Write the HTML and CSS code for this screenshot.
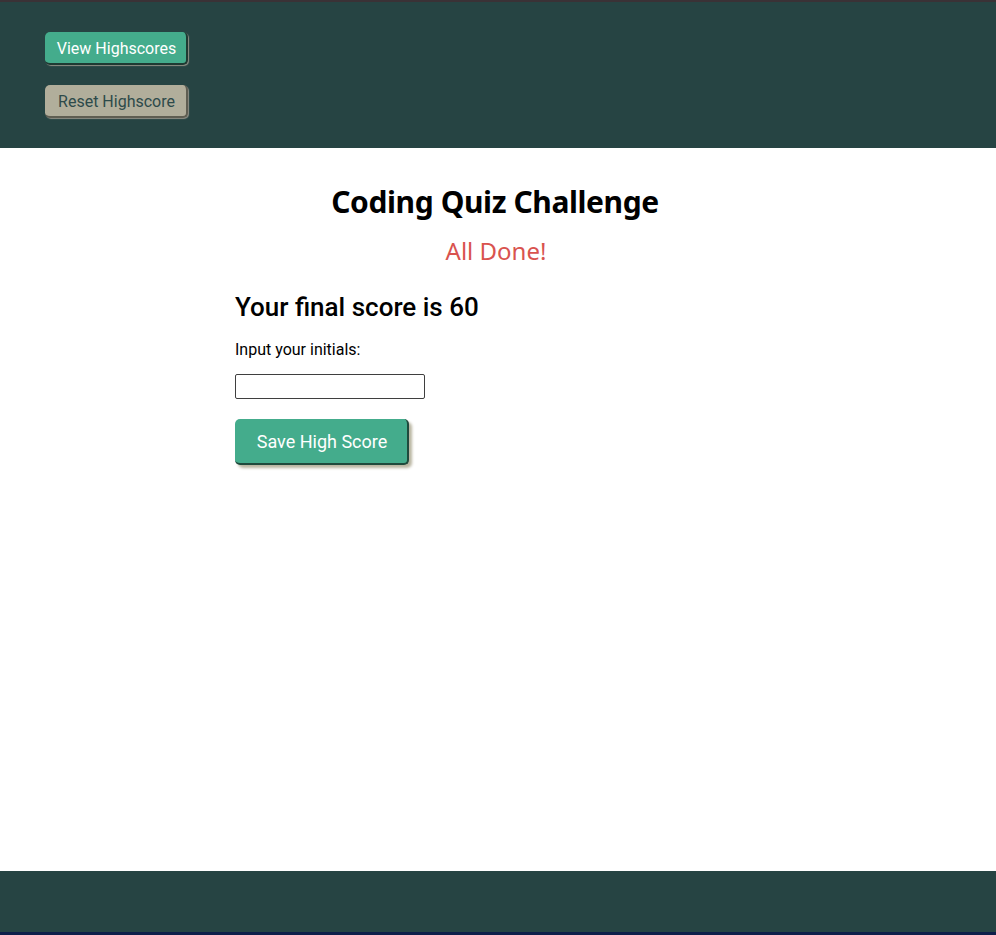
FILE: index.html
```html
<!DOCTYPE html>
<html lang="en">
<head>
<meta charset="utf-8">
<title>Coding Quiz Challenge</title>
<link rel="stylesheet" href="styles.css">
</head>
<body>
<div class="page">
  <header class="topbar">
    <button class="btn btn-view">View Highscores</button>
    <button class="btn btn-reset">Reset Highscore</button>
  </header>
  <main class="main">
    <h1 class="title">Coding Quiz Challenge</h1>
    <p class="done">All Done!</p>
    <section class="result">
      <h2 class="score">Your final score is 60</h2>
      <label class="label" for="initials">Input your initials:</label>
      <input class="initials" id="initials" type="text">
      <button class="btn-save">Save High Score</button>
    </section>
  </main>
  <footer class="footer"></footer>
</div>
</body>
</html>
```

FILE: styles.css
```css
* { box-sizing: border-box; }
html, body { margin: 0; padding: 0; }
body {
  font-family: Roboto, "Liberation Sans", sans-serif;
  background: #ffffff;
  color: #000;
}
.page {
  display: flex;
  flex-direction: column;
  min-height: 935px;
}
.topbar {
  height: 148px;
  background: #264443;
  border-top: 2px solid #3a3236;
  display: flex;
  flex-direction: column;
  align-items: flex-start;
  gap: 20px;
  padding: 30px 0 0 45px;
}
.btn {
  font-family: Roboto, "Liberation Sans", sans-serif;
  font-size: 16px;
  height: 33px;
  width: 143px;
  padding: 1px 0 0 2px;
  border: none;
  border-right: 2px solid #1f3a33;
  border-bottom: 2px solid #1f3a33;
  border-radius: 5px;
  box-shadow: 1px 1px 1px #8f8f86;
  cursor: pointer;
}
.btn-view { background: #44ac8c; color: #ffffff; }
.btn-reset { background: #b1ae9b; color: #2d4a4a; border-color: #5f5e52; }
.main {
  flex: 1;
  width: 526px;
  margin: 0 auto;
  padding-top: 32px;
}
.title {
  font-family: "Noto Sans", sans-serif;
  font-size: 30px;
  font-weight: 700;
  letter-spacing: -0.4px;
  line-height: 44px;
  text-align: center;
  margin: 0 6px 0 0;
}
.done {
  font-family: "Noto Sans", sans-serif;
  font-size: 24px;
  line-height: 33px;
  color: #d9534f;
  text-align: center;
  margin: 10px 4px 0 0;
}
.result {
  display: flex;
  flex-direction: column;
  align-items: flex-start;
}
.score {
  font-size: 26px;
  font-weight: 500;
  line-height: 30px;
  margin: 25px 0 0 0;
}
.label {
  font-size: 16px;
  line-height: 19px;
  margin-top: 18px;
}
.initials {
  margin-top: 15px;
  width: 190px;
  height: 25px;
  border: 1px solid #3f3f3f;
  border-radius: 2px;
  font-size: 16px;
}
.btn-save {
  margin-top: 20px;
  width: 174px;
  height: 46px;
  padding: 0 0 0 2px;
  background: #44ac8c;
  color: #ffffff;
  font-family: Roboto, "Liberation Sans", sans-serif;
  font-size: 18px;
  border: none;
  border-right: 2px solid #1f4a3c;
  border-bottom: 2px solid #1f4a3c;
  border-radius: 5px;
  box-shadow: 3px 3px 3px #b9b5a1;
  cursor: pointer;
}
.footer {
  height: 64px;
  background: #264443;
  border-bottom: 3px solid #0e1f4a;
}
```
